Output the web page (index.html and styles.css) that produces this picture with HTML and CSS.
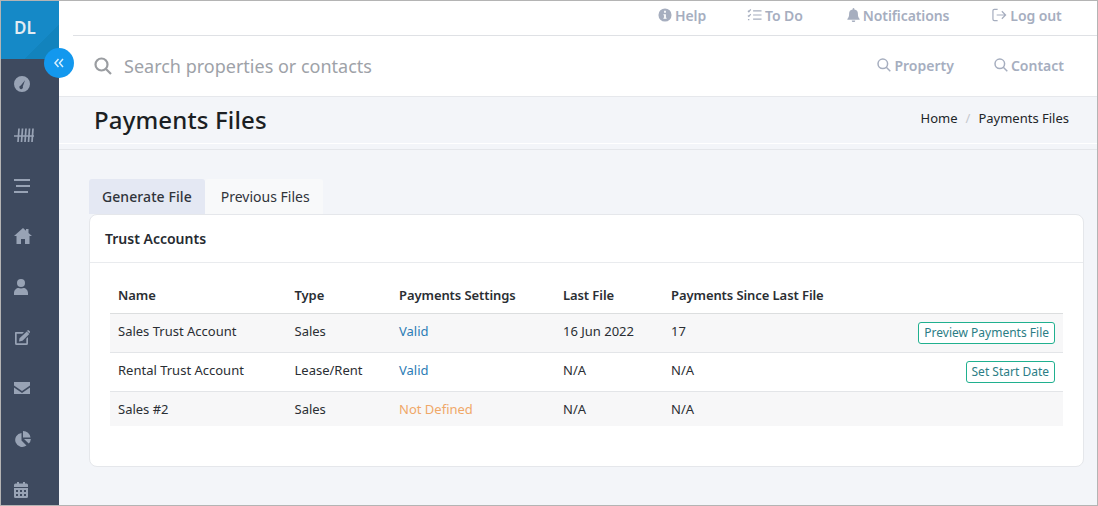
FILE: index.html
```html
<!DOCTYPE html>
<html lang="en">
<head>
<meta charset="utf-8">
<title>Payments Files</title>
<link rel="stylesheet" href="styles.css">
</head>
<body>
<div class="app">
  <aside class="sidebar">
    <div class="brand">DL</div>
    <nav class="nav">
      <a class="nav-item"><svg viewBox="0 0 16 16" class="nav-icon"><path fill-rule="evenodd" d="M8 0a8 8 0 1 1 0 16A8 8 0 0 1 8 0zm3 4.200L6.800 9.600a1.800 1.800 0 1 0 2 1z"/></svg></a>
      <a class="nav-item"><svg viewBox="0 0 20 16" class="nav-icon tally"><path d="M0 9h20M5 1.500L4 15M8.500 1.500L7.500 15M12 1.500L11 15M15.500 1.500L14.500 15M19 1.500L18 15"/></svg></a>
      <a class="nav-item"><svg viewBox="0 0 16 14" class="nav-icon"><path d="M0 0h16v2H0zM2 6h14v2H2zM0 12h14v2H0z"/></svg></a>
      <a class="nav-item"><svg viewBox="0 0 18 16" class="nav-icon wide"><path d="M9 0l3 2.700V1h2.500v3.900L18 8h-2.500v8H11v-5H7v5H2.500V8H0z"/></svg></a>
      <a class="nav-item"><svg viewBox="0 0 14 16" class="nav-icon narrow"><circle cx="7" cy="4" r="4"/><path d="M0 16v-2c0-3 2.500-5 4.500-5 1 .5 4 .5 5 0 2 0 4.500 2 4.500 5v2z"/></svg></a>
      <a class="nav-item"><svg viewBox="0 0 16 16" class="nav-icon"><path d="M1.500 2H10L8.300 3.700H2.700v9.600h9.600V8.700L14 7v6.500a1.500 1.500 0 0 1-1.500 1.500h-10A1.500 1.500 0 0 1 1 13.500v-10A1.500 1.500 0 0 1 1.500 2zM12.800 1.500l2.500 2.500-6.800 6.800L5 11.500l.5-3.300zM13.600.4a1 1 0 0 1 1.300 0l.9.9a1 1 0 0 1 0 1.300l-.5.700-2.500-2.500z"/></svg></a>
      <a class="nav-item"><svg viewBox="0 0 16 12" class="nav-icon"><path d="M0 0h16v3.500L8 9 0 3.500zM0 5.500L8 11l8-5.500V12H0z"/></svg></a>
      <a class="nav-item"><svg viewBox="0 0 17 16" class="nav-icon wide"><path d="M7 2v7.500l5 5A7 7 0 1 1 7 2z"/><path d="M8.500 0A7.500 7.500 0 0 1 16 6.500H8.500zM9.500 8H16.400a7 7 0 0 1-2.200 4.600z"/></svg></a>
      <a class="nav-item"><svg viewBox="0 0 14 16" class="nav-icon narrow"><path fill-rule="evenodd" d="M3 0h2v1.500h4V0h2v1.500h1.500A1.500 1.500 0 0 1 14 3v2H0V3a1.500 1.500 0 0 1 1.500-1.500H3zM0 6h14v8.500a1.500 1.500 0 0 1-1.500 1.500h-11A1.500 1.500 0 0 1 0 14.500zM2 8v2h2V8zm4 0v2h2V8zm4 0v2h2V8zM2 12v2h2v-2zm4 0v2h2v-2zm4 0v2h2v-2z"/></svg></a>
    </nav>
  </aside>
  <button class="toggle" aria-label="Collapse"><svg viewBox="0 0 12 10"><path d="M5.500 1L2 5l3.500 4M10 1L6.500 5l3.500 4"/></svg></button>
  <main class="main">
    <div class="topbar">
      <a class="top-link link-help"><svg viewBox="0 0 16 16" class="ico"><path fill-rule="evenodd" d="M8 .5a7.500 7.500 0 1 1 0 15A7.500 7.500 0 0 1 8 .5zM7 3.200v2.200h2V3.200zM6.200 7v1.300H7v2.700h-.8v1.300h3.600V11H9V7z"/></svg>Help</a>
      <a class="top-link link-todo"><svg viewBox="0 0 16 14" class="ico line"><path d="M1 2.500l1 1 2-2.500M1 7.500l1 1 2-2.500M1 12h1.500M6.500 2.500H15.500M6.500 7H15.500M6.500 11.500H15.500"/></svg>To Do</a>
      <a class="top-link link-notif"><svg viewBox="0 0 14 16" class="ico bell"><path d="M7 0a1 1 0 0 1 1 1v.7A4.800 4.800 0 0 1 12 6.500c0 4 1.200 5 2 6v.8H0v-.8c.8-1 2-2 2-6a4.800 4.800 0 0 1 4-4.800V1a1 1 0 0 1 1-1zM5 14.200h4A2 2 0 0 1 5 14.200z"/></svg>Notifications</a>
      <a class="top-link link-logout"><svg viewBox="0 0 16 14" class="ico line"><path d="M6 1H2.500A1.500 1.500 0 0 0 1 2.500v9A1.500 1.500 0 0 0 2.500 13H6M5 7h9.500M10.500 3l4 4-4 4"/></svg>Log out</a>
    </div>
    <div class="searchbar">
      <svg viewBox="0 0 18 18" class="search-icon"><circle cx="7.500" cy="7.500" r="6"/><path d="M12 12l5 5"/></svg>
      <span class="search-text">Search properties or contacts</span>
      <a class="search-link link-prop"><svg viewBox="0 0 14 14" class="mag"><circle cx="5.800" cy="5.800" r="4.800"/><path d="M9.300 9.300L13.300 13.300"/></svg>Property</a>
      <a class="search-link link-contact"><svg viewBox="0 0 14 14" class="mag"><circle cx="5.800" cy="5.800" r="4.800"/><path d="M9.300 9.300L13.300 13.300"/></svg>Contact</a>
    </div>
    <div class="titlebar">
      <h1 class="title">Payments Files</h1>
      <div class="crumbs"><span>Home</span><span class="sep">/</span><span>Payments Files</span></div>
    </div>
    <div class="content">
      <div class="tabs">
        <div class="tab active">Generate File</div>
        <div class="tab">Previous Files</div>
      </div>
      <section class="card">
        <h2 class="card-head">Trust Accounts</h2>
        <div class="card-body">
          <table class="table">
            <thead>
              <tr><th class="c1">Name</th><th class="c2">Type</th><th class="c3">Payments Settings</th><th class="c4">Last File</th><th class="c5">Payments Since Last File</th><th></th></tr>
            </thead>
            <tbody>
              <tr class="odd"><td>Sales Trust Account</td><td>Sales</td><td class="valid">Valid</td><td>16 Jun 2022</td><td>17</td><td class="act"><a class="btn">Preview Payments File</a></td></tr>
              <tr><td>Rental Trust Account</td><td>Lease/Rent</td><td class="valid">Valid</td><td>N/A</td><td>N/A</td><td class="act"><a class="btn">Set Start Date</a></td></tr>
              <tr class="odd"><td>Sales #2</td><td>Sales</td><td class="undefined">Not Defined</td><td>N/A</td><td>N/A</td><td class="act"></td></tr>
            </tbody>
          </table>
        </div>
      </section>
    </div>
  </main>
</div>
</body>
</html>
```
FILE: styles.css
```css
* { box-sizing: border-box; }
html, body { margin: 0; height: 100%; overflow: hidden; }
body { font-family: "Noto Sans", "Open Sans", sans-serif; font-size: 13px; color: #212529; background: #f3f5f9; }
.app { position: relative; display: flex; width: 1098px; height: 506px; border: 1px solid #b4b4b4; overflow: hidden; }
.sidebar { flex: 0 0 58px; background: #3e4a5f; display: flex; flex-direction: column; height: 504px; }
.brand { height: 58px; flex: none; background: linear-gradient(135deg, #1589c7 70%, #1283bd 70%); color: #e2ecf3; font-size: 17px; font-weight: 600; display: flex; align-items: center; padding: 0 0 5px 13px; }
.nav { display: flex; flex-direction: column; padding: 0 0 0 13px; }
.nav-item { height: 50.700px; display: flex; align-items: center; flex: none; }
.nav-icon { width: 16px; height: 16px; fill: #98a3b5; }
.nav-icon.wide { width: 18px; }
.nav-icon.narrow { width: 14px; }
.nav-icon.tally { width: 20px; fill: none; stroke: #98a3b5; stroke-width: 1.700; }
.toggle { position: absolute; left: 43px; top: 47px; width: 30px; height: 30px; border-radius: 50%; border: 0; padding: 0; background: #1398ee; display: flex; align-items: center; justify-content: center; }
.toggle svg { width: 12px; height: 10px; fill: none; stroke: #d8eefc; stroke-width: 1.500; }
.main { flex: 1; min-width: 0; display: flex; flex-direction: column; background: #f3f5f9; }
.topbar { height: 35px; flex: none; margin-left: 14px; background: #fff; border-bottom: 1px solid #dfe1e5; display: flex; align-items: center; padding-bottom: 6px; font-weight: 600; letter-spacing: -0.1px; font-size: 14px; color: #a6aebf; box-shadow: -14px 0 0 #fff; }
.top-link { display: flex; align-items: center; gap: 3px; }
.ico { width: 14px; height: 14px; fill: #a6aebf; }
.ico.line { fill: none; stroke: #a6aebf; stroke-width: 1.300; width: 15px; }
.ico.bell { width: 13px; }
.link-help { margin-left: 585px; }
.link-todo { margin-left: 41px; }
.link-notif { margin-left: 44px; }
.link-logout { margin-left: 43px; gap: 3px; }
.searchbar { height: 61px; flex: none; background: #fff; border-bottom: 1px solid #e6e8ec; display: flex; align-items: center; padding-left: 35px; color: #a6aebf; }
.search-icon { width: 18px; height: 18px; fill: none; stroke: #9a9da1; stroke-width: 2.200; }
.search-text { font-size: 18px; color: #9ea2a8; margin-left: 12px; }
.search-link { display: flex; align-items: center; gap: 3px; font-size: 14px; font-weight: 600; padding-bottom: 2px; }
.mag { width: 14px; height: 14px; fill: none; stroke: #a6aebf; stroke-width: 1.500; }
.link-prop { margin-left: auto; }
.link-contact { margin-left: 40px; margin-right: 33px; }
.titlebar { height: 47px; display: flex; align-items: center; padding: 0 28px 2px 35px; justify-content: space-between; border-bottom: 1px solid #fff; flex: none; }
.title { margin: 0; font-size: 24px; font-weight: 500; letter-spacing: 0.15px; color: #1b1f24; }
.crumbs { display: flex; gap: 8px; font-size: 13px; color: #212529; padding-bottom: 3px; }
.sep { color: #c6c9ce; }
.content { border-top: 5px solid #f3f5f9; padding: 30px 13px 0 30px; position: relative; flex: 1; }
.content::before { content: ""; position: absolute; left: 0; right: 0; top: 0; height: 1px; background: #e4e6ea; }
.tabs { display: flex; height: 35px; }
.tab { padding: 0 13px 1px 16px; display: flex; align-items: center; font-size: 14px; background: #f8f9fa; border-radius: 3px 3px 0 0; color: #30343a; }
.tab.active { background: #e4e8f3; font-weight: 500; letter-spacing: 0.08px; padding: 0 13px 1px; }
.card { background: #fff; border: 1px solid #e5e7eb; border-radius: 8px; height: 253px; }
.card-head { margin: 0; height: 48px; border-bottom: 1px solid #e9ebee; font-size: 14px; font-weight: 600; color: #262a30; padding: 0 15px; display: flex; align-items: center; }
.card-body { padding: 14px 20px 0; }
.table { width: 100%; border-collapse: collapse; font-size: 13px; color: #2a2e33; table-layout: fixed; }
.table th { text-align: left; font-weight: 600; letter-spacing: -0.08px; height: 36px; padding: 0 8px; }
.table td { height: 39px; padding: 8px 8px 0; line-height: 18px; vertical-align: top; border-top: 1px solid #e3e5e8; }
.table tbody tr:first-child td { border-top-color: #dcdedf; }
.table tr:last-child td { height: 35px; }
.odd { background: #f7f7f8; }
.c1 { width: 176.500px; }
.c2 { width: 104.500px; }
.c3 { width: 164px; }
.c4 { width: 108px; }
.c5 { width: 220px; }
.valid { color: #2c7cb5; }
.undefined { color: #f0a868; }
.act { text-align: right; }
.btn { display: inline-block; vertical-align: top; border: 1px solid #20b08f; border-radius: 3px; padding: 0 5px; font-size: 12px; line-height: 20px; color: #2b7d85; background: #fff; }
```
